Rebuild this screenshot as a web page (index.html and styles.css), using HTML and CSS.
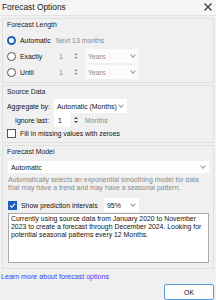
FILE: index.html
```html
<!DOCTYPE html>
<html>
<head>
<meta charset="utf-8">
<link rel="stylesheet" href="styles.css">
</head>
<body>
<div class="window">
  <div class="titlebar">
    <span class="title">Forecast Options</span>
    <svg class="close" width="8" height="8" viewBox="0 0 8 8"><path d="M0.5 0.5L7.5 7.5M7.5 0.5L0.5 7.5" stroke="#333" stroke-width="1.1" fill="none"/></svg>
  </div>
  <div class="content">
    <div class="group g1">
      <div class="glabel">Forecast Length</div>
      <div class="row r16">
        <span class="radio on"></span><span class="lbl w-auto">Automatic</span><span class="muted">Next 13 months</span>
      </div>
      <div class="row r16">
        <span class="radio"></span><span class="lbl w-opt">Exactly</span>
        <span class="spinval muted">1</span><span class="spin"><i class="up"></i><i class="down"></i></span>
        <span class="select years"><span class="muted">Years</span><span class="chev"></span></span>
      </div>
      <div class="row r16">
        <span class="radio"></span><span class="lbl w-opt">Until</span>
        <span class="spinval muted">1</span><span class="spin"><i class="up"></i><i class="down"></i></span>
        <span class="select years"><span class="muted">Years</span><span class="chev"></span></span>
      </div>
    </div>
    <div class="group g2">
      <div class="glabel">Source Data</div>
      <div class="row r14">
        <span class="flabel">Aggregate by:</span>
        <span class="select agg"><span>Automatic (Months)</span><span class="chev"></span></span>
      </div>
      <div class="row r14">
        <span class="flabel indent">Ignore last:</span>
        <span class="input small">1</span><span class="spin dark"><i class="up"></i><i class="down"></i></span>
        <span class="muted months">Months</span>
      </div>
      <div class="row r12">
        <span class="check"></span><span class="lbl">Fill in missing values with zeroes</span>
      </div>
    </div>
    <div class="group g3">
      <div class="glabel">Forecast Model</div>
      <div class="select wide"><span>Automatic</span><span class="chev"></span></div>
      <div class="desc">Automatically selects an exponential smoothing model for data that may have a trend and may have a seasonal pattern.</div>
      <div class="row r14 predrow">
        <span class="check on"><svg width="7" height="7" viewBox="0 0 7 7"><path d="M1 3.6L2.8 5.3L6 1.6" stroke="#fff" stroke-width="1.1" fill="none"/></svg></span>
        <span class="lbl w-pred">Show prediction intervals</span>
        <span class="select pct"><span>95%</span><span class="chev"></span></span>
      </div>
      <div class="textarea">Currently using source data from January 2020 to November 2023 to create a forecast through December 2024. Looking for potential seasonal patterns every 12 Months.</div>
    </div>
    <div class="footer">
      <a class="link">Learn more about forecast options</a>
      <div class="btnrow"><button class="ok">OK</button></div>
    </div>
  </div>
</div>
</body>
</html>
```
FILE: styles.css
```css
* { box-sizing: border-box; }
html, body { margin: 0; padding: 0; }
body {
  width: 216px; height: 300px; overflow: hidden;
  background: #f0f0f0;
  font-family: "Liberation Sans", Tahoma, Arial, sans-serif;
  font-size: 6.9px;
  color: #111;
  white-space: nowrap;
}
.window { width: 216px; height: 300px; display: flex; flex-direction: column; }
.titlebar {
  height: 17px; background: #f5f5f5; border-bottom: 1px solid #e4e4e4;
  display: flex; align-items: center; justify-content: space-between;
  padding: 0 4px 2px 2px;
}
.title { font-size: 8.4px; color: #222; }
.content { padding: 2px 2px 0 2px; display: flex; flex-direction: column; }
.group {
  border: 1px solid #e0e0e0; background: #f0f0f0;
  padding: 0 4px 0 4px; display: flex; flex-direction: column;
}
.g1 { height: 65px; }
.g2 { height: 58px; margin-top: 2px; }
.g3 { height: 124px; margin-top: 2px; padding-right: 4px; }
.glabel { height: 12px; line-height: 12px; color: #222; }
.g1 .glabel { margin-bottom: 1px; }
.g2 .glabel { margin-bottom: 1px; }
.g3 .glabel { margin-bottom: 3px; }
.row { display: flex; align-items: center; }
.r16 { height: 16px; }
.r14 { height: 14px; }
.r12 { height: 12px; }
.radio {
  width: 9px; height: 9px; border-radius: 50%; border: 1px solid #555;
  background: #fff; margin-right: 4px; flex: none;
}
.radio.on { border: 2.5px solid #1f5fbf; background: #fff; }
.lbl { color: #111; }
.w-auto { width: 36px; }
.w-opt { width: 38px; }
.muted { color: #8a8a8a; }
.spinval { width: 14px; text-align: left; padding-left: 1px; }
.spin { display: flex; flex-direction: column; align-items: center; gap: 2px; width: 8px; margin-right: 5px; }
.spin i { width: 0; height: 0; border-left: 2px solid transparent; border-right: 2px solid transparent; }
.spin .up { border-bottom: 2.5px solid #999; }
.spin .down { border-top: 2.5px solid #999; }
.spin.dark .up { border-bottom-color: #444; }
.spin.dark .down { border-top-color: #444; }
.select {
  display: flex; align-items: center; justify-content: space-between;
  background: #fbfbfb; padding: 0 3px 0 3px; height: 14px;
}
.chev {
  width: 4px; height: 4px; border-right: 1px solid #999; border-bottom: 1px solid #999;
  transform: rotate(45deg); margin-top: -2px; margin-right: 1px;
}
.years { width: 54px; }
.flabel { width: 47px; color: #111; }
.indent { padding-left: 8px; }
.agg { width: 73px; background: #fff; }
.input { background: #fff; height: 14px; display: flex; align-items: center; padding-left: 4px; }
.small { width: 16px; margin-right: 2px; }
.check {
  width: 9px; height: 9px; border: 1px solid #555; background: #fff;
  margin-right: 4px; flex: none; display: flex; align-items: center; justify-content: center;
}
.check.on { background: #1f5fbf; border-color: #1f5fbf; }
.wide { height: 12px; background: #fff; margin-left: 1px; }
.desc { color: #8a8a8a; line-height: 8px; margin-top: 3px; padding-left: 1px; height: 22px; white-space: normal; }
.predrow { margin-left: 1px; }
.w-pred { width: 83px; }
.pct { width: 35px; background: #fff; }
.textarea {
  margin-top: 1px; margin-left: 1px; height: 50px; background: #fff;
  border: 1px solid #aaa; padding: 1px 2px; line-height: 8px; color: #111; white-space: normal;
}
.footer { display: flex; flex-direction: column; }
.link { color: #3a3aff; height: 12px; line-height: 12px; margin-top: 2px; margin-left: -1px; font-size: 7.1px; }
.btnrow { display: flex; justify-content: flex-end; margin-top: 1px; }
.ok {
  width: 50px; height: 16px; background: #fdfdfd; border: 1px solid #5b9bd5;
  border-radius: 2px; font-family: inherit; font-size: 6.9px; color: #111; padding: 0;
}
```
